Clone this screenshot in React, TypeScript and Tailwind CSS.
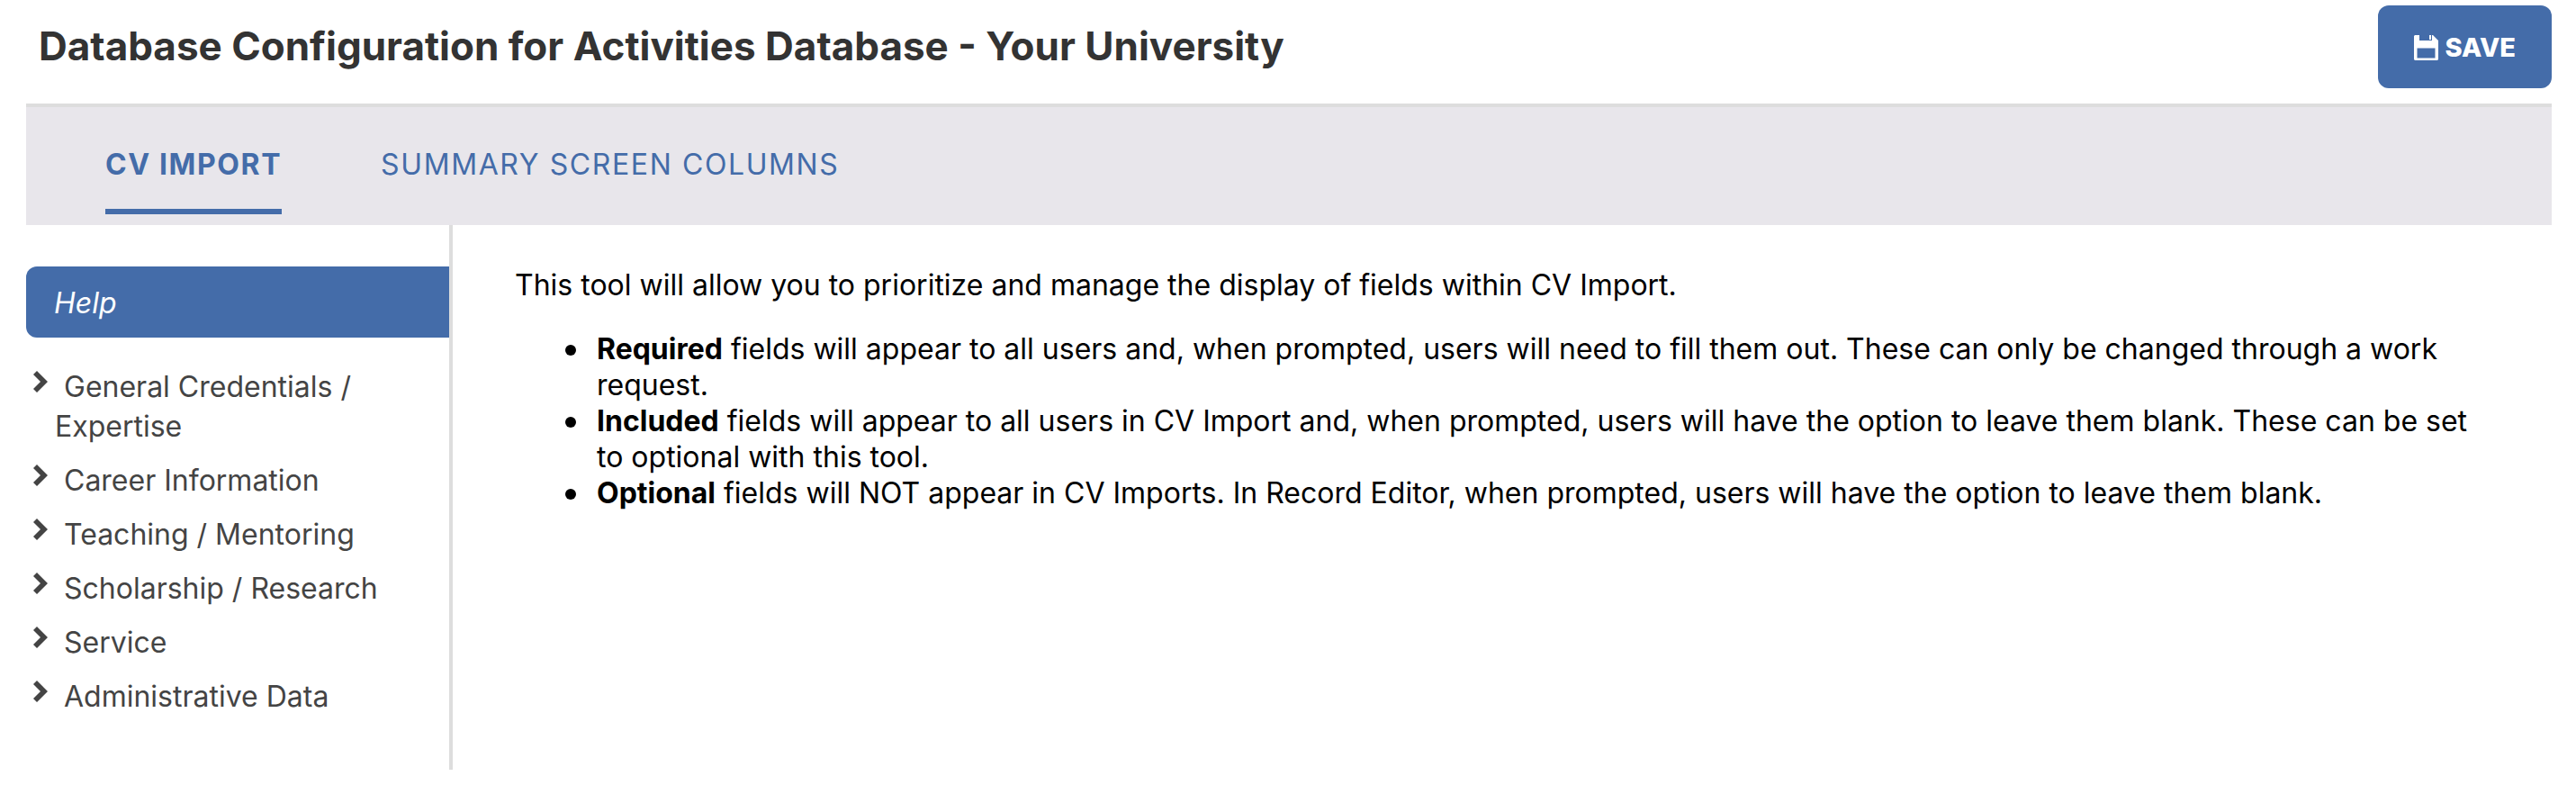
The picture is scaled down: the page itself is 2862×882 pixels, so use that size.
import { useState } from 'react';

const tabs = ['CV Import', 'Summary Screen Columns'];

const sections = [
  'General Credentials / Expertise',
  'Career Information',
  'Teaching / Mentoring',
  'Scholarship / Research',
  'Service',
  'Administrative Data',
];

const fieldTypes = [
  {
    name: 'Required',
    text: 'fields will appear to all users and, when prompted, users will need to fill them out. These can only be changed through a work request.',
  },
  {
    name: 'Included',
    text: 'fields will appear to all users in CV Import and, when prompted, users will have the option to leave them blank. These can be set to optional with this tool.',
  },
  {
    name: 'Optional',
    text: 'fields will NOT appear in CV Imports. In Record Editor, when prompted, users will have the option to leave them blank.',
  },
];

function SaveIcon() {
  return (
    <svg viewBox="0 0 27 28" className="h-7 w-[27px]" fill="currentColor" aria-hidden="true">
      <path fillRule="evenodd" d="M0 1l1-1h5v6h14V0h1l6 6v21l-1 1H1l-1-1zM3.5 14.5v11h20v-11z" />
      <path d="M17 0h2v5h-2z" />
    </svg>
  );
}

function Chevron() {
  return (
    <svg viewBox="0 0 16 24" className="mt-1 h-6 w-4 shrink-0" fill="currentColor" aria-hidden="true">
      <path d="M4 0l12 12L4 24l-4-4 8-8-8-8z" />
    </svg>
  );
}

export default function App() {
  const [activeTab, setActiveTab] = useState(tabs[0]);

  return (
    <div className="pl-[29px] pr-[27px] pt-1.5 font-['Inter',sans-serif] text-[32px] text-black">
      <header className="flex items-start justify-between pb-[17px] pl-3.5">
        <h1 className="pt-[17px] text-[44px] leading-[56px] font-bold text-[#333]">
          Database Configuration for Activities Database - Your University
        </h1>
        <button className="flex h-[92px] items-center gap-2 rounded-xl bg-[#446ca9] px-10 pt-0.5 text-[29px] font-extrabold text-white">
          <SaveIcon />
          SAVE
        </button>
      </header>

      <nav className="flex gap-[110px] border-t-4 border-[#ddd] bg-[#e8e6eb] px-[88px] pb-3">
        {tabs.map((tab) => (
          <button
            key={tab}
            onClick={() => setActiveTab(tab)}
            className={`border-b-6 pt-[43px] pb-[29px] leading-[41px] tracking-wider text-[#446ca9] uppercase ${
              tab === activeTab ? 'border-[#446ca9] font-bold' : 'border-transparent'
            }`}
          >
            {tab}
          </button>
        ))}
      </nav>

      <div className="flex">
        <aside className="w-[474px] shrink-0 border-r-4 border-[#ddd] pt-[46px] pb-[59px] text-[#444]">
          <a href="#help" className="block rounded-l-xl bg-[#446ca9] pt-[19px] pb-[17px] pl-[31px] leading-[43px] text-white italic">
            Help
          </a>
          <ul className="mt-[33px] flex flex-col gap-4 leading-[44px]">
            {sections.map((s) => (
              <li key={s} className="flex pl-2">
                <Chevron />
                <a href="#section" className="ml-2 pr-16 indent-2.5">{s}</a>
              </li>
            ))}
          </ul>
        </aside>

        <main className="flex-1 pt-[47px] pr-20 pl-[69px] leading-10">
          <p>This tool will allow you to prioritize and manage the display of fields within CV Import.</p>
          <ul className="mt-[31px] pl-14">
            {fieldTypes.map((f) => (
              <li key={f.name} className="flex gap-[23px]">
                <span className="mt-[15px] size-3 shrink-0 rounded-full bg-black" />
                <p>
                  <strong>{f.name}</strong> {f.text}
                </p>
              </li>
            ))}
          </ul>
        </main>
      </div>
    </div>
  );
}
